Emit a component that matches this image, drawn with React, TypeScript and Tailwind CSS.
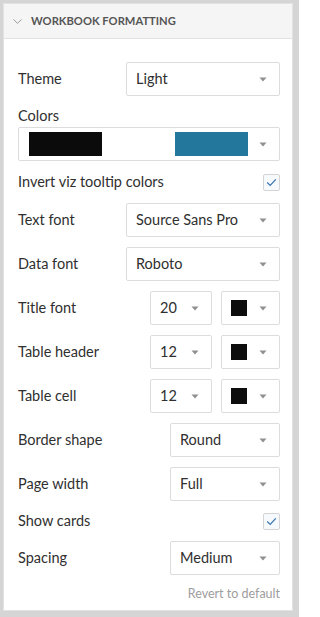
import React from "react";

const font = { fontFamily: "Lato, 'Open Sans', sans-serif" };

function Arrow() {
  return (
    <svg width="8" height="5" viewBox="0 0 8 5" className="shrink-0">
      <path d="M0.5 0.5 L7.5 0.5 L4 4.5 Z" fill="#8f8f8f" />
    </svg>
  );
}

function Select({ value, w }: { value: string; w: string }) {
  return (
    <div className={`${w} h-[34px] border border-[#dcdcdc] rounded-[2px] flex items-center justify-between pl-[9px] pr-[12px] text-[14.5px] text-[#2f2f2f]`}>
      <span>{value}</span>
      <Arrow />
    </div>
  );
}

function Check() {
  return (
    <div className="w-[17px] h-[17px] border border-[#d4d4d4] rounded-[2px] bg-[#f7fafd] flex items-center justify-center">
      <svg width="11" height="9" viewBox="0 0 11 9">
        <path d="M1.2 4.6 L4.2 7.4 L9.8 1.4" fill="none" stroke="#3d78b3" strokeWidth="1.3" />
      </svg>
    </div>
  );
}

function Row({ label, children }: { label: string; children: React.ReactNode }) {
  return (
    <div className="flex items-center justify-between">
      <span className="text-[14.5px] text-[#2f2f2f]">{label}</span>
      {children}
    </div>
  );
}

function SizeColor({ size }: { size: string }) {
  return (
    <div className="flex gap-[9px]">
      <div className="w-[62px] h-[34px] border border-[#dcdcdc] rounded-[2px] flex items-center justify-between pl-[9px] pr-[12px] text-[14.5px] text-[#2f2f2f]">
        <span>{size}</span>
        <Arrow />
      </div>
      <div className="w-[59px] h-[34px] border border-[#dcdcdc] rounded-[2px] flex items-center justify-between pl-[9px] pr-[12px]">
        <div className="w-[16px] h-[16px] bg-[#0d0d0d]" />
        <Arrow />
      </div>
    </div>
  );
}

export default function App() {
  return (
    <div className="w-[299px] h-[617px] bg-[#d5d5d5] pl-[3px] pt-[3px] pr-[6px] pb-[6px]" style={font}>
      <div className="h-full border border-[#e2e2e2] bg-white flex flex-col">
        <div className="h-[35px] bg-[#f5f5f5] border-b border-[#e2e2e2] flex items-center pl-[9px] gap-[9px]">
          <svg width="9" height="5" viewBox="0 0 9 5">
            <path d="M0.5 0.5 L4.5 4.3 L8.5 0.5" fill="none" stroke="#9a9a9a" strokeWidth="1" />
          </svg>
          <span className="text-[11.2px] font-bold text-[#555555]">WORKBOOK FORMATTING</span>
        </div>
        <div className="pl-[14px] pr-[12px] pt-[23px] flex flex-col">
          <Row label="Theme">
            <Select value="Light" w="w-[154px]" />
          </Row>
          <div className="mt-[10px] h-[20px] leading-[20px] text-[14.5px] text-[#2f2f2f]">Colors</div>
          <div className="mt-[1px] h-[34px] border border-[#dcdcdc] rounded-[2px] flex items-center justify-between pl-[10px] pr-[12px]">
            <div className="flex">
              <div className="w-[73px] h-[24px] bg-[#0b0b0b]" />
              <div className="w-[73px] h-[24px] bg-white" />
              <div className="w-[73px] h-[24px] bg-[#23779c]" />
            </div>
            <Arrow />
          </div>
          <div className="mt-[10px] h-[22px] flex items-center justify-between">
            <span className="text-[14.5px] text-[#2f2f2f]">Invert viz tooltip colors</span>
            <Check />
          </div>
          <div className="mt-[10px]">
            <Row label="Text font">
              <Select value="Source Sans Pro" w="w-[154px]" />
            </Row>
          </div>
          <div className="mt-[10px]">
            <Row label="Data font">
              <Select value="Roboto" w="w-[154px]" />
            </Row>
          </div>
          <div className="mt-[10px]">
            <Row label="Title font">
              <SizeColor size="20" />
            </Row>
          </div>
          <div className="mt-[10px]">
            <Row label="Table header">
              <SizeColor size="12" />
            </Row>
          </div>
          <div className="mt-[10px]">
            <Row label="Table cell">
              <SizeColor size="12" />
            </Row>
          </div>
          <div className="mt-[10px]">
            <Row label="Border shape">
              <Select value="Round" w="w-[110px]" />
            </Row>
          </div>
          <div className="mt-[10px]">
            <Row label="Page width">
              <Select value="Full" w="w-[110px]" />
            </Row>
          </div>
          <div className="mt-[10px] h-[20px] flex items-center justify-between">
            <span className="text-[14.5px] text-[#2f2f2f]">Show cards</span>
            <Check />
          </div>
          <div className="mt-[10px]">
            <Row label="Spacing">
              <Select value="Medium" w="w-[110px]" />
            </Row>
          </div>
          <div className="mt-[9px] text-right text-[12.5px] leading-[20px] text-[#9d9d9d]">Revert to default</div>
        </div>
      </div>
    </div>
  );
}
